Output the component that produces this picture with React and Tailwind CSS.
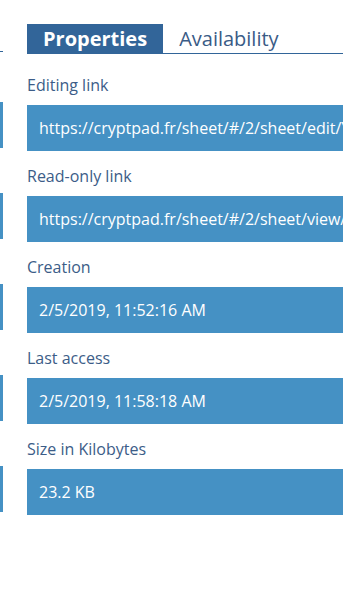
const FIELDS = [
  { label: 'Editing link', value: 'https://cryptpad.fr/sheet/#/2/sheet/edit/Y2kqvN3BmWq0fZqMx7ZmNnDa/' },
  { label: 'Read-only link', value: 'https://cryptpad.fr/sheet/#/2/sheet/view/Y2kqvN3BmWq0fZqMx7ZmNnDa/' },
  { label: 'Creation', value: '2/5/2019, 11:52:16 AM' },
  { label: 'Last access', value: '2/5/2019, 11:58:18 AM' },
  { label: 'Size in Kilobytes', value: '23.2 KB' }
];

function Field({ label, value }) {
  return (
    <div className="flex flex-col">
      <div className="text-[16px] leading-[24px] text-[#3c5d88] mb-2 whitespace-nowrap">{label}</div>
      <div className="h-[46px] bg-[#4591c4] text-white text-[16px] leading-[24px] px-3 py-[11px] whitespace-nowrap overflow-hidden">
        {value}
      </div>
    </div>
  );
}

export default function App() {
  return (
    <div
      className="w-[343px] h-[594px] bg-white overflow-hidden flex"
      style={{ fontFamily: '"Open Sans", "Noto Sans", sans-serif' }}
    >
      {/* previous panel, clipped at the left edge */}
      <div className="w-[3px] shrink-0 flex flex-col">
        <div className="h-[52px] border-b border-[#326599]"></div>
        <div className="mt-[50px] flex flex-col gap-[45px]">
          {FIELDS.map((f) => (
            <div key={f.label} className="h-[46px] bg-[#4591c4]"></div>
          ))}
        </div>
      </div>

      <div className="ml-6 flex-1 min-w-0 flex flex-col pt-6">
        <div className="flex border-b border-[#326599]">
          <div className="h-[29px] bg-[#326599] px-4 text-[20px] leading-[30px] font-bold text-white whitespace-nowrap">
            Properties
          </div>
          <div className="h-[29px] px-4 text-[20px] leading-[30px] text-[#3a5b86] whitespace-nowrap">
            Availability
          </div>
        </div>

        <div className="mt-[19px] flex flex-col gap-[13px]">
          {FIELDS.map((f) => (
            <Field key={f.label} label={f.label} value={f.value} />
          ))}
        </div>
      </div>
    </div>
  );
}
